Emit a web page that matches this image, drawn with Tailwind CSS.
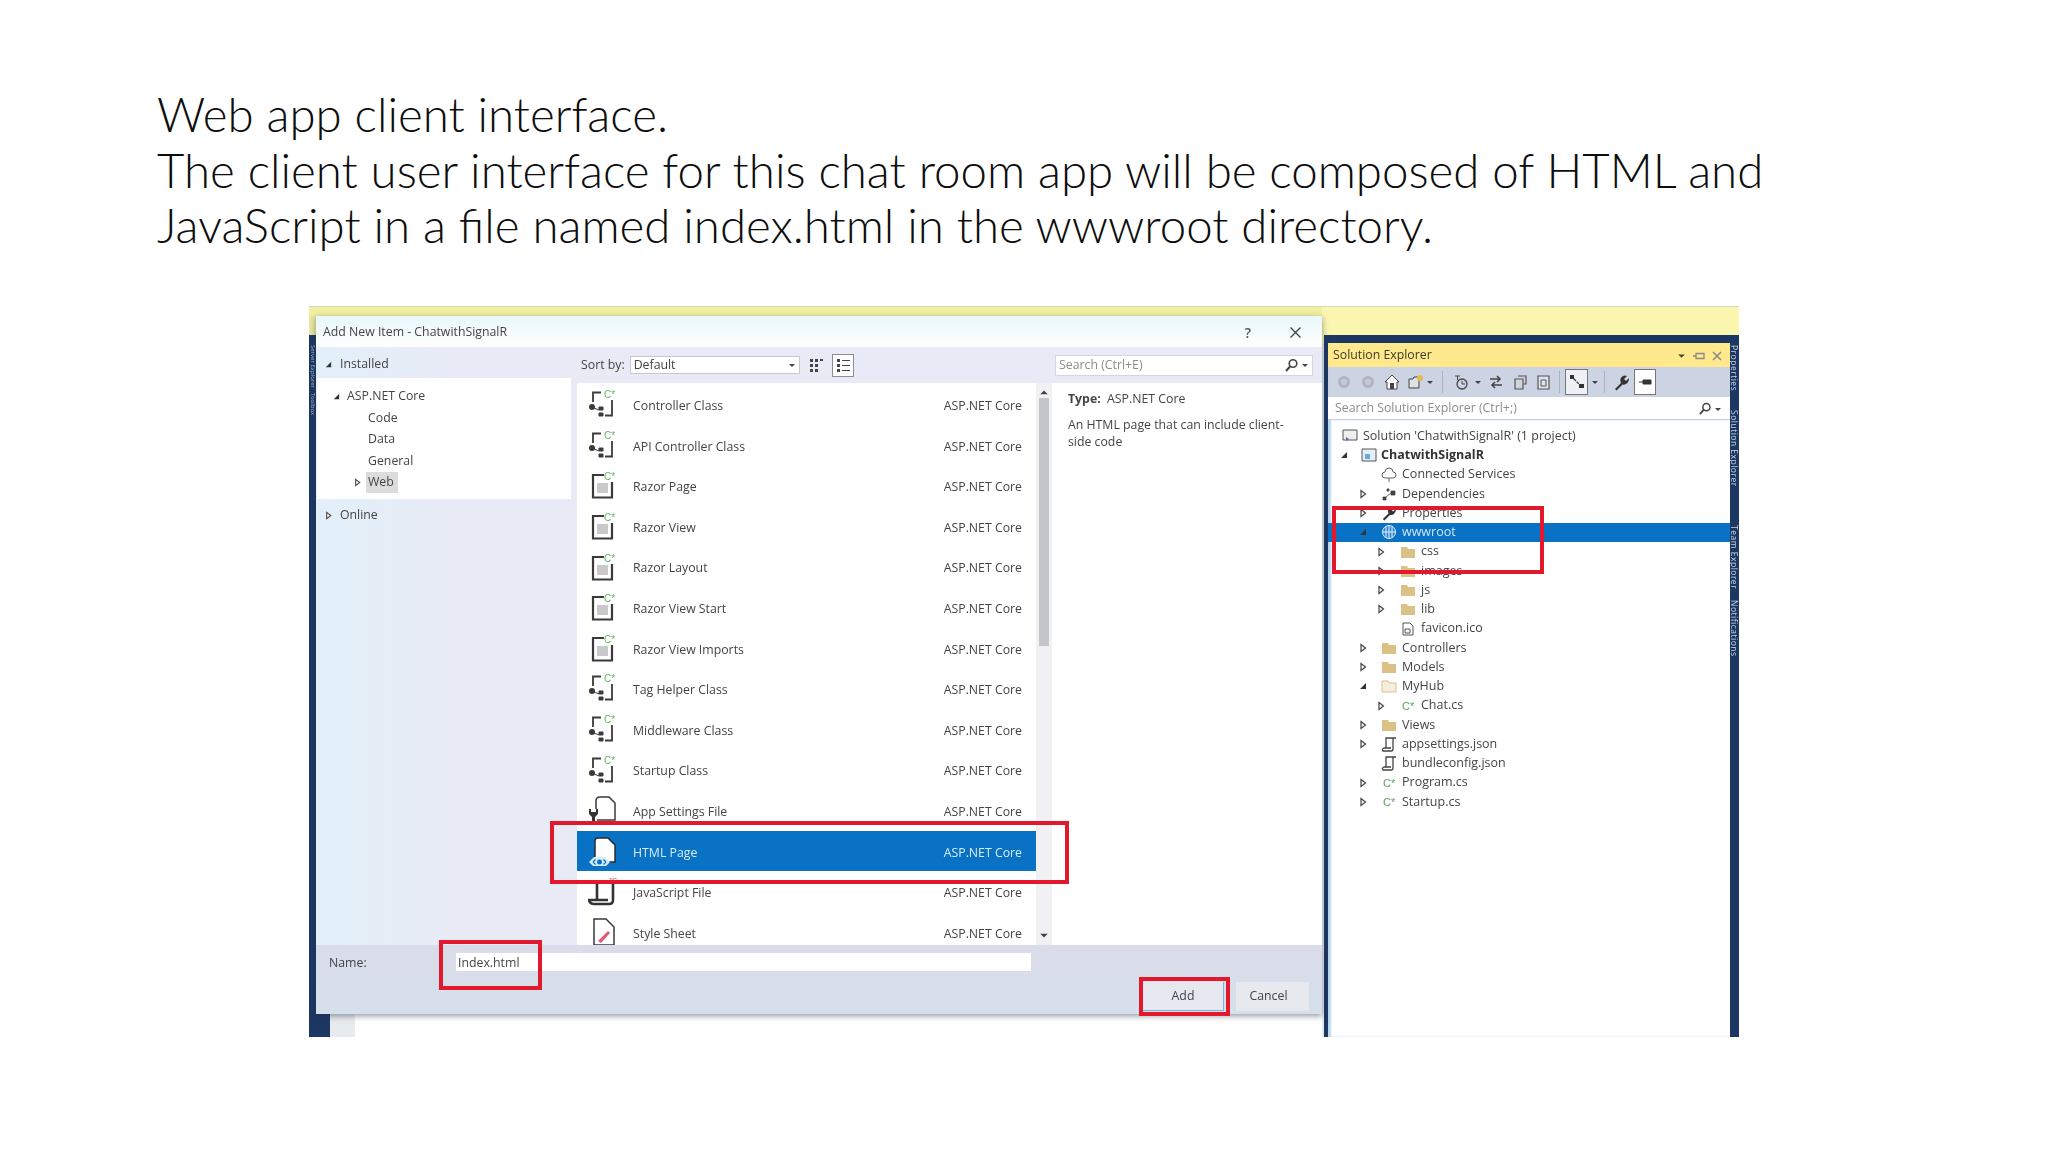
<!DOCTYPE html>
<html lang="en">
<head>
<meta charset="UTF-8">
<title>Web app client interface</title>
<script src="https://cdn.jsdelivr.net/npm/@tailwindcss/browser@4"></script>
</head>
<body class="bg-white">
<!-- shared icons -->
<svg class="hidden">
  <symbol id="ctrl" viewBox="0 0 30 30">
    <path d="M5 13V3.500H13M24 11V26.500H17" fill="none" stroke="#3a3a3a" stroke-width="1.800"/>
    <circle cx="4" cy="18" r="3" fill="#3a3a3a"/><path d="M6 19L11 21M11 18h4v3h-4zM11 24h4v3h-4z" fill="#3a3a3a" stroke="#3a3a3a"/>
    <text x="16" y="9" font-size="10" fill="#5cb85c" font-family="Liberation Sans">C*</text>
  </symbol>
  <symbol id="razor" viewBox="0 0 30 30">
    <path d="M16 5H5V27.500H24V12" fill="#fff" stroke="#3a3a3a" stroke-width="2.200"/>
    <rect x="9" y="13" width="11" height="10" fill="#c9c9c9"/>
    <text x="16" y="10" font-size="10" fill="#5cb85c" font-family="Liberation Sans">C*</text>
  </symbol>
  <symbol id="settings" viewBox="0 0 30 30">
    <path d="M8 14V6Q8 2 12 2H21L27 8V25H9" fill="#fff" stroke="#3a3a3a" stroke-width="1.500"/>
    <path d="M1 14v5l3 3v7h3v-7l3-3v-5l-2 0v3h-5v-3z" fill="#333"/>
  </symbol>
  <symbol id="html" viewBox="0 0 30 30">
    <path d="M7 24V5Q7 2 10 2H20L27 9V26H12" fill="#fff" stroke="#2b2b2b" stroke-width="1.500"/>
    <path d="M1 26L6 21H17L22 26L17 31H6z" fill="#d5ecfb"/>
    <path d="M5 26l2.500-2.500M5 26l2.500 2.500M18 26l-2.500-2.500M18 26l-2.500 2.500" stroke="#0a72c4" stroke-width="1.200"/><circle cx="11.500" cy="26" r="2.500" fill="#0a72c4"/>
  </symbol>
  <symbol id="js" viewBox="0 0 30 30">
    <path d="M9 24V6H20M25 6V24Q25 28 21 28H6Q2 28 1 24H20" fill="none" stroke="#333" stroke-width="2.600"/>
    <text x="20" y="7" font-size="8" fill="#e04040" font-family="Liberation Sans">JS</text>
  </symbol>
  <symbol id="css" viewBox="0 0 30 30">
    <path d="M6 2H18L26 10V28H6z" fill="#fff" stroke="#3a3a3a" stroke-width="1.500"/>
    <path d="M10 24L20 14L22 16L13 26z" fill="#e05a78"/>
  </symbol>
  <symbol id="open" viewBox="0 0 10 10"><path d="M8 2V8H2z" fill="#333"/></symbol>
  <symbol id="closed" viewBox="0 0 10 10"><path d="M3 1.500L7.500 5L3 8.500z" fill="#fff" stroke="#444" stroke-width="1.200"/></symbol>
  <symbol id="folder" viewBox="0 0 16 16"><path d="M1 3H7L8 5H15V14H1z" fill="#dcc186"/></symbol>
  <symbol id="cs" viewBox="0 0 16 16"><text x="2" y="12" font-size="11" fill="#5fa35f" font-family="Liberation Sans">C*</text></symbol>
  <symbol id="json" viewBox="0 0 16 16"><path d="M5 12V2H15M12 2V13Q12 15 10 15H2Q0.500 13 3 12H10" fill="none" stroke="#444" stroke-width="1.300"/></symbol>
  <symbol id="drop" viewBox="0 0 8 8"><path d="M1 3H7L4 6z" fill="#444"/></symbol>
</svg>

<div class="w-[2048px] h-[1152px] overflow-hidden font-['Open_Sans',sans-serif]">
  <div class="h-[306px] pt-[86px] pl-[157px] font-['Lato',sans-serif] font-light text-[47.400px] leading-[55.500px] text-[#0d0d0d]">
    <p>Web app client interface.</p>
    <p>The client user interface for this chat room app will be composed of HTML and</p>
    <p>JavaScript in a file named index.html in the wwwroot directory.</p>
  </div>

  <!-- the pasted IDE screenshot -->
  <div class="relative ml-[309px] w-[1430px] h-[731px] overflow-hidden blur-[0.6px] flex text-[12.300px] text-[#444] bg-[#fbf6b0]">
    <!-- left part: dialog -->
    <div class="w-[1013px] flex flex-col shrink-0">
      <div class="h-[10px] bg-[#f0f0a0] border-t border-[#d8d8c0]"></div>
      <div class="flex flex-1 min-h-0">
        <div class="w-[7px] flex flex-col shrink-0">
          <div class="h-[19px] bg-[#e8e8a0]"></div>
          <div class="flex-1 bg-[#1d3763] overflow-hidden text-[6px] leading-[7px] text-[#aab8d0] [writing-mode:vertical-rl] pt-[10px] whitespace-nowrap">Server Explorer &nbsp; Toolbox</div>
        </div>
        <div class="flex-1 flex flex-col min-w-0">
          <!-- dialog box -->
          <div class="h-[698px] flex flex-col bg-[#e8ebf5] shadow-[0_2px_6px_rgba(40,50,70,0.5)] relative z-10">
            <div class="h-[31px] shrink-0 flex items-center bg-gradient-to-b from-[#e8f7fa] to-white pl-[7px] pr-[20px] pt-[2px]">
              <span>Add New Item - ChatwithSignalR</span>
              <span class="ml-auto text-[14px] text-[#555] font-semibold">?</span>
              <svg class="ml-[38px] w-[13px] h-[13px]" viewBox="0 0 13 13"><path d="M1.500 1.500L11.500 11.500M11.500 1.500L1.500 11.500" stroke="#444" stroke-width="1.400"/></svg>
            </div>
            <div class="flex h-[598px] shrink-0">
              <!-- templates tree -->
              <div class="w-[261px] shrink-0 bg-gradient-to-r from-[#e2f0f9] via-[#e8ebf5] to-[#e8ebf5]">
                <div class="h-[31px] flex items-center pl-[8px] pt-[3px]">
                  <svg class="w-[9px] h-[9px]"><use href="#open"/></svg><span class="ml-[7px]">Installed</span>
                </div>
                <div class="ml-[1px] w-[254px] h-[121px] bg-white pt-[8px] pl-[15px]">
                  <div class="h-[21px] flex items-center"><svg class="w-[9px] h-[9px]"><use href="#open"/></svg><span class="ml-[6px]">ASP.NET Core</span></div>
                  <div class="h-[21.500px] flex items-center pl-[36px]">Code</div>
                  <div class="h-[21.500px] flex items-center pl-[36px]">Data</div>
                  <div class="h-[21.500px] flex items-center pl-[36px]">General</div>
                  <div class="h-[21px] flex items-center pl-[21px]"><svg class="w-[9px] h-[9px]"><use href="#closed"/></svg><span class="ml-[4px] px-[2px] w-[32px] h-[21px] bg-[#dcdcdc] flex items-center">Web</span></div>
                </div>
                <div class="h-[30px] flex items-center pl-[8px] pt-[2px]"><svg class="w-[9px] h-[9px]"><use href="#closed"/></svg><span class="ml-[7px]">Online</span></div>
              </div>
              <!-- item list -->
              <div class="w-[475px] shrink-0 flex flex-col">
                <div class="h-[36px] shrink-0 flex items-center pl-[4px]">
                  <span>Sort by:</span>
                  <div class="ml-[5px] w-[170px] h-[18px] bg-white border border-[#c6c9d4] flex items-center pl-[3px] pr-[3px] justify-between"><span>Default</span><svg class="w-[8px] h-[8px]"><use href="#drop"/></svg></div>
                  <svg class="ml-[8px] w-[16px] h-[16px]" viewBox="0 0 16 16"><path d="M2 2h3v3h-3zM7 2h3v3h-3zM12 2h3v2h-3zM2 7h3v3h-3zM7 7h3v3h-3zM2 12h3v3h-3zM7 12h3v3h-3z" fill="#444"/></svg>
                  <div class="ml-[8px] w-[22px] h-[23px] border border-[#8a8d99] bg-white flex items-center justify-center">
                    <svg class="w-[16px] h-[16px]" viewBox="0 0 16 16"><path d="M2 2h3v3h-3zM2 7h3v3h-3zM2 12h3v3h-3z" fill="#444"/><path d="M7 3.500h8M7 8.500h8M7 13.500h8" stroke="#444"/></svg>
                  </div>
                </div>
                <div class="flex flex-1 min-h-0 bg-white">
                  <div class="w-[459px] pt-[1px] overflow-hidden">
                    <div class="h-[40.600px] flex items-center pl-[11px] pr-[14px]"><svg class="w-[30px] h-[30px]"><use href="#ctrl"/></svg><span class="ml-[15px] pt-[4px]">Controller Class</span><span class="ml-auto pt-[4px]">ASP.NET Core</span></div>
                    <div class="h-[40.600px] flex items-center pl-[11px] pr-[14px]"><svg class="w-[30px] h-[30px]"><use href="#ctrl"/></svg><span class="ml-[15px] pt-[4px]">API Controller Class</span><span class="ml-auto pt-[4px]">ASP.NET Core</span></div>
                    <div class="h-[40.600px] flex items-center pl-[11px] pr-[14px]"><svg class="w-[30px] h-[30px]"><use href="#razor"/></svg><span class="ml-[15px] pt-[4px]">Razor Page</span><span class="ml-auto pt-[4px]">ASP.NET Core</span></div>
                    <div class="h-[40.600px] flex items-center pl-[11px] pr-[14px]"><svg class="w-[30px] h-[30px]"><use href="#razor"/></svg><span class="ml-[15px] pt-[4px]">Razor View</span><span class="ml-auto pt-[4px]">ASP.NET Core</span></div>
                    <div class="h-[40.600px] flex items-center pl-[11px] pr-[14px]"><svg class="w-[30px] h-[30px]"><use href="#razor"/></svg><span class="ml-[15px] pt-[4px]">Razor Layout</span><span class="ml-auto pt-[4px]">ASP.NET Core</span></div>
                    <div class="h-[40.600px] flex items-center pl-[11px] pr-[14px]"><svg class="w-[30px] h-[30px]"><use href="#razor"/></svg><span class="ml-[15px] pt-[4px]">Razor View Start</span><span class="ml-auto pt-[4px]">ASP.NET Core</span></div>
                    <div class="h-[40.600px] flex items-center pl-[11px] pr-[14px]"><svg class="w-[30px] h-[30px]"><use href="#razor"/></svg><span class="ml-[15px] pt-[4px]">Razor View Imports</span><span class="ml-auto pt-[4px]">ASP.NET Core</span></div>
                    <div class="h-[40.600px] flex items-center pl-[11px] pr-[14px]"><svg class="w-[30px] h-[30px]"><use href="#ctrl"/></svg><span class="ml-[15px] pt-[4px]">Tag Helper Class</span><span class="ml-auto pt-[4px]">ASP.NET Core</span></div>
                    <div class="h-[40.600px] flex items-center pl-[11px] pr-[14px]"><svg class="w-[30px] h-[30px]"><use href="#ctrl"/></svg><span class="ml-[15px] pt-[4px]">Middleware Class</span><span class="ml-auto pt-[4px]">ASP.NET Core</span></div>
                    <div class="h-[40.600px] flex items-center pl-[11px] pr-[14px]"><svg class="w-[30px] h-[30px]"><use href="#ctrl"/></svg><span class="ml-[15px] pt-[4px]">Startup Class</span><span class="ml-auto pt-[4px]">ASP.NET Core</span></div>
                    <div class="h-[40.600px] flex items-center pl-[11px] pr-[14px]"><svg class="w-[30px] h-[30px]"><use href="#settings"/></svg><span class="ml-[15px] pt-[4px]">App Settings File</span><span class="ml-auto pt-[4px]">ASP.NET Core</span></div>
                    <div class="h-[40.600px] flex items-center pl-[11px] pr-[14px] bg-[#0a72c4] text-[#d5ecfb]"><svg class="w-[30px] h-[30px]"><use href="#html"/></svg><span class="ml-[15px] pt-[4px]">HTML Page</span><span class="ml-auto pt-[4px]">ASP.NET Core</span></div>
                    <div class="h-[40.600px] flex items-center pl-[11px] pr-[14px]"><svg class="w-[30px] h-[30px]"><use href="#js"/></svg><span class="ml-[15px] pt-[4px]">JavaScript File</span><span class="ml-auto pt-[4px]">ASP.NET Core</span></div>
                    <div class="h-[40.600px] flex items-center pl-[11px] pr-[14px]"><svg class="w-[30px] h-[30px]"><use href="#css"/></svg><span class="ml-[15px] pt-[4px]">Style Sheet</span><span class="ml-auto pt-[4px]">ASP.NET Core</span></div>
                  </div>
                  <div class="w-[16px] bg-[#f1f1f3] flex flex-col items-center relative">
                    <svg class="w-[10px] h-[10px] mt-[5px] rotate-180"><use href="#drop"/></svg>
                    <div class="w-[10px] h-[248px] bg-[#c4c5cb] mt-[0px]"></div>
                    <svg class="w-[10px] h-[10px] mt-auto mb-[5px]"><use href="#drop"/></svg>
                  </div>
                </div>
              </div>
              <!-- description -->
              <div class="flex-1 flex flex-col min-w-0">
                <div class="h-[36px] shrink-0 flex items-center">
                  <div class="ml-[3px] w-[258px] h-[21px] bg-white border border-[#d4d7e0] flex items-center pl-[3px] pr-[3px] text-[#8c8c8c]">
                    <span>Search (Ctrl+E)</span>
                    <svg class="ml-auto w-[15px] h-[15px]" viewBox="0 0 15 15"><circle cx="9" cy="5.500" r="3.800" fill="none" stroke="#444" stroke-width="1.600"/><path d="M6 8.500L2 13" stroke="#444" stroke-width="2"/></svg>
                    <svg class="w-[8px] h-[8px] ml-[2px]"><use href="#drop"/></svg>
                  </div>
                </div>
                <div class="flex-1 bg-white pl-[16px] pt-[7px] leading-[17px]">
                  <p><b class="font-bold">Type:</b> &nbsp;ASP.NET Core</p>
                  <p class="mt-[9px] w-[230px]">An HTML page that can include client-side code</p>
                </div>
              </div>
            </div>
            <!-- name row -->
            <div class="flex-1 relative bg-gradient-to-b from-[#dadce9] to-[#d5e0ea]">
              <div class="flex items-center h-[18px] mt-[8px] pl-[13px]">
                <span class="w-[127px] pt-[2px]">Name:</span>
                <div class="w-[575px] h-[18px] bg-white flex items-center pl-[2px] pt-[2px]">Index.html</div>
              </div>
              <div class="flex mt-[11px] justify-end pr-[13px] gap-[12px]">
                <div class="w-[81px] h-[29px] bg-[#e6e8f0] border-b border-r border-[#7fb0de] flex items-center justify-center">Add</div>
                <div class="w-[73px] h-[29px] bg-[#e8e9ef] flex items-center justify-center pr-[8px]">Cancel</div>
              </div>
            </div>
          </div>
          <!-- what shows below the dialog -->
          <div class="flex-1 flex bg-white">
            <div class="w-[14px] bg-[#1d3763]"></div>
            <div class="w-[25px] bg-[#e8ebee]"></div>
          </div>
        </div>
      </div>
    </div>

    <!-- right part: solution explorer -->
    <div class="flex-1 flex flex-col min-w-0">
      <div class="h-[29px] bg-[#fbf6b0] border-t border-[#d8d8c0]"></div>
      <div class="flex-1 flex min-h-0 bg-[#fbf6b0]">
        <div class="w-[2px] mt-[8px] bg-[#e4e9f2]"></div>
        <div class="flex-1 flex bg-[#1d3763] min-w-0">
          <div class="w-[4px]"></div>
          <div class="flex-1 flex flex-col mt-[8px] min-w-0 bg-white">
            <div class="h-[24px] shrink-0 bg-[#ffe98c] flex items-center pl-[5px] pr-[8px] text-[#3c3c28] pt-[1px]">
              <span>Solution Explorer</span>
              <svg class="ml-auto w-[9px] h-[9px]"><use href="#drop"/></svg>
              <svg class="ml-[6px] w-[14px] h-[10px]" viewBox="0 0 14 10"><path d="M1 5h3M4 2.500h8v5h-8z" fill="none" stroke="#888" stroke-width="1.300"/></svg>
              <svg class="ml-[6px] w-[10px] h-[10px]" viewBox="0 0 10 10"><path d="M1 1L9 9M9 1L1 9" stroke="#888" stroke-width="1.500"/></svg>
            </div>
            <div class="h-[30px] shrink-0 bg-[#ccd3e3] flex items-center pl-[9px]">
              <svg class="w-[14px] h-[14px]" viewBox="0 0 14 14"><circle cx="7" cy="7" r="6" fill="#b0b4c0"/><circle cx="7" cy="7" r="3" fill="#c4cad8"/></svg>
              <svg class="ml-[10px] w-[14px] h-[14px]" viewBox="0 0 14 14"><circle cx="7" cy="7" r="6" fill="#b0b4c0"/><circle cx="7" cy="7" r="3" fill="#c4cad8"/></svg>
              <svg class="ml-[9px] w-[16px] h-[16px]" viewBox="0 0 16 16"><path d="M1 8L8 1L15 8H13V15H3V8z" fill="#fff" stroke="#444"/><rect x="6" y="9" width="4" height="6" fill="#444"/></svg>
              <svg class="ml-[7px] w-[17px] h-[16px]" viewBox="0 0 17 16"><path d="M2 5H6L7 3H12V14H2z" fill="#dfe0e4" stroke="#444"/><circle cx="13" cy="4" r="3" fill="#e9b949"/></svg>
              <svg class="ml-[2px] w-[8px] h-[8px]"><use href="#drop"/></svg>
              <div class="ml-[8px] w-[1px] h-[22px] bg-[#aab1c2]"></div>
              <svg class="ml-[10px] w-[17px] h-[17px]" viewBox="0 0 17 17"><circle cx="9" cy="10" r="5" fill="none" stroke="#444" stroke-width="1.300"/><path d="M9 7v3h3M2 2h5M4.500 2v4" fill="none" stroke="#444"/></svg>
              <svg class="ml-[4px] w-[8px] h-[8px]"><use href="#drop"/></svg>
              <svg class="ml-[6px] w-[16px] h-[14px]" viewBox="0 0 16 14"><path d="M2 4h10M9 1l3 3-3 3M14 10H4M7 7l-3 3 3 3" fill="none" stroke="#444" stroke-width="1.500"/></svg>
              <svg class="ml-[8px] w-[15px] h-[15px]" viewBox="0 0 15 15"><path d="M6 1h8v8h-3M3 4h8v10H3z" fill="#cfd3de" stroke="#555" stroke-width="1.200"/></svg>
              <svg class="ml-[8px] w-[17px] h-[17px]" viewBox="0 0 17 17"><path d="M3 2h11v13H3z" fill="#e0e3ec" stroke="#555" stroke-width="1.200"/><path d="M6 6h5v6H6z" fill="none" stroke="#555"/></svg>
              <div class="ml-[7px] w-[1px] h-[22px] bg-[#aab1c2]"></div>
              <div class="ml-[5px] w-[23px] h-[26px] bg-[#eef0f6] border border-[#777] flex items-center justify-center">
                <svg class="w-[16px] h-[16px]" viewBox="0 0 16 16"><path d="M2 2L13 13" stroke="#444" stroke-width="1.400" stroke-dasharray="3 1"/><rect x="1" y="1" width="4" height="4" fill="#333"/><rect x="10" y="10" width="5" height="4" fill="#333"/></svg>
              </div>
              <svg class="ml-[3px] w-[8px] h-[8px]"><use href="#drop"/></svg>
              <div class="ml-[5px] w-[1px] h-[22px] bg-[#aab1c2]"></div>
              <svg class="ml-[8px] w-[17px] h-[17px]" viewBox="0 0 17 17"><path d="M2 15L8 9Q6 4 10 2Q12 1 14 2L11 5L13 7L16 4Q16 8 13 10Q11 11 9.500 10.500L3.500 16.500z" fill="#333"/></svg>
              <div class="ml-[4px] w-[22px] h-[26px] bg-white border border-[#777] flex items-center justify-center">
                <svg class="w-[14px] h-[8px]" viewBox="0 0 14 8"><path d="M1 4h4M5 2h8v4H5z" fill="#333" stroke="#333"/></svg>
              </div>
            </div>
            <div class="h-[23px] shrink-0 bg-white border-b border-[#ccd0dc] flex items-center pl-[7px] pr-[8px] text-[#8c8c8c] pt-[1px]">
              <span>Search Solution Explorer (Ctrl+;)</span>
              <svg class="ml-auto w-[14px] h-[14px]" viewBox="0 0 15 15"><circle cx="9" cy="5.500" r="3.800" fill="none" stroke="#444" stroke-width="1.600"/><path d="M6 8.500L2 13" stroke="#444" stroke-width="2"/></svg>
              <svg class="ml-[2px] w-[8px] h-[8px]"><use href="#drop"/></svg>
            </div>
            <!-- tree -->
            <div class="pt-[6.500px] flex-1 overflow-hidden text-[12.500px] shadow-[inset_3px_0_2px_rgba(170,205,235,0.8)]">
              <div class="h-[19.250px] flex items-center pl-[14px]"><svg class="w-[16px] h-[16px]" viewBox="0 0 16 16"><path d="M1 2h14v10H1z" fill="#eee" stroke="#555"/><path d="M4 9l3 2-3 2z" fill="#8659a8"/></svg><span class="ml-[5px]">Solution 'ChatwithSignalR' (1 project)</span></div>
              <div class="h-[19.250px] flex items-center pl-[11px]"><svg class="w-[10px] h-[10px]"><use href="#open"/></svg><svg class="ml-[12px] w-[16px] h-[16px]" viewBox="0 0 16 16"><path d="M1 2h14v12H1z" fill="#e4eef6" stroke="#555"/><path d="M4 7h5v5H4z" fill="#6aa8d8"/></svg><span class="ml-[4px] font-bold text-[#333]">ChatwithSignalR</span></div>
              <div class="h-[19.250px] flex items-center pl-[53px]"><svg class="w-[16px] h-[16px]" viewBox="0 0 16 16"><path d="M4 11a3 3 0 0 1 0-6a4 4 0 0 1 8 0a3 3 0 0 1 0 6zM8 11v4" fill="none" stroke="#666"/></svg><span class="ml-[5px]">Connected Services</span></div>
              <div class="h-[19.250px] flex items-center pl-[30px]"><svg class="w-[10px] h-[10px]"><use href="#closed"/></svg><svg class="ml-[13px] w-[16px] h-[16px]" viewBox="0 0 16 16"><path d="M2 11h3v3H2zM10 5h4v4h-4zM5 11L10 7M6 3h2v2H6z" fill="#444" stroke="#444" stroke-width="0.800"/></svg><span class="ml-[5px]">Dependencies</span></div>
              <div class="h-[19.250px] flex items-center pl-[30px]"><svg class="w-[10px] h-[10px]"><use href="#closed"/></svg><svg class="ml-[13px] w-[16px] h-[16px]" viewBox="0 0 17 17"><path d="M2 15L8 9Q6 4 10 2Q12 1 14 2L11 5L13 7L16 4Q16 8 13 10Q11 11 9.500 10.500L3.500 16.500z" fill="#333"/></svg><span class="ml-[5px]">Properties</span></div>
              <div class="h-[19.250px] flex items-center pl-[30px] bg-[#0a72c4] text-[#cfe6fa]"><svg class="w-[10px] h-[10px]"><use href="#open"/></svg><svg class="ml-[13px] w-[16px] h-[16px]" viewBox="0 0 16 16"><circle cx="8" cy="8" r="6.500" fill="#2f86cf" stroke="#e5f2fc"/><path d="M1.500 8h13M8 1.500v13M5 2.500v11M11 2.500v11" stroke="#e5f2fc"/></svg><span class="ml-[5px]">wwwroot</span></div>
              <div class="h-[19.250px] flex items-center pl-[48px]"><svg class="w-[10px] h-[10px]"><use href="#closed"/></svg><svg class="ml-[14px] w-[16px] h-[16px]"><use href="#folder"/></svg><span class="ml-[5px]">css</span></div>
              <div class="h-[19.250px] flex items-center pl-[48px]"><svg class="w-[10px] h-[10px]"><use href="#closed"/></svg><svg class="ml-[14px] w-[16px] h-[16px]"><use href="#folder"/></svg><span class="ml-[5px]">images</span></div>
              <div class="h-[19.250px] flex items-center pl-[48px]"><svg class="w-[10px] h-[10px]"><use href="#closed"/></svg><svg class="ml-[14px] w-[16px] h-[16px]"><use href="#folder"/></svg><span class="ml-[5px]">js</span></div>
              <div class="h-[19.250px] flex items-center pl-[48px]"><svg class="w-[10px] h-[10px]"><use href="#closed"/></svg><svg class="ml-[14px] w-[16px] h-[16px]"><use href="#folder"/></svg><span class="ml-[5px]">lib</span></div>
              <div class="h-[19.250px] flex items-center pl-[72px]"><svg class="w-[16px] h-[16px]" viewBox="0 0 16 16"><path d="M3 2H10L13 5V14H3zM5 8h5v4H5z" fill="none" stroke="#555"/></svg><span class="ml-[5px]">favicon.ico</span></div>
              <div class="h-[19.250px] flex items-center pl-[30px]"><svg class="w-[10px] h-[10px]"><use href="#closed"/></svg><svg class="ml-[13px] w-[16px] h-[16px]"><use href="#folder"/></svg><span class="ml-[5px]">Controllers</span></div>
              <div class="h-[19.250px] flex items-center pl-[30px]"><svg class="w-[10px] h-[10px]"><use href="#closed"/></svg><svg class="ml-[13px] w-[16px] h-[16px]"><use href="#folder"/></svg><span class="ml-[5px]">Models</span></div>
              <div class="h-[19.250px] flex items-center pl-[30px]"><svg class="w-[10px] h-[10px]"><use href="#open"/></svg><svg class="ml-[13px] w-[16px] h-[16px]" viewBox="0 0 16 16"><path d="M1 3H7L8 5H15V14H1z" fill="#f4eee0" stroke="#dcc186"/></svg><span class="ml-[5px]">MyHub</span></div>
              <div class="h-[19.250px] flex items-center pl-[48px]"><svg class="w-[10px] h-[10px]"><use href="#closed"/></svg><svg class="ml-[14px] w-[16px] h-[16px]"><use href="#cs"/></svg><span class="ml-[5px]">Chat.cs</span></div>
              <div class="h-[19.250px] flex items-center pl-[30px]"><svg class="w-[10px] h-[10px]"><use href="#closed"/></svg><svg class="ml-[13px] w-[16px] h-[16px]"><use href="#folder"/></svg><span class="ml-[5px]">Views</span></div>
              <div class="h-[19.250px] flex items-center pl-[30px]"><svg class="w-[10px] h-[10px]"><use href="#closed"/></svg><svg class="ml-[13px] w-[16px] h-[16px]"><use href="#json"/></svg><span class="ml-[5px]">appsettings.json</span></div>
              <div class="h-[19.250px] flex items-center pl-[53px]"><svg class="w-[16px] h-[16px]"><use href="#json"/></svg><span class="ml-[5px]">bundleconfig.json</span></div>
              <div class="h-[19.250px] flex items-center pl-[30px]"><svg class="w-[10px] h-[10px]"><use href="#closed"/></svg><svg class="ml-[13px] w-[16px] h-[16px]"><use href="#cs"/></svg><span class="ml-[5px]">Program.cs</span></div>
              <div class="h-[19.250px] flex items-center pl-[30px]"><svg class="w-[10px] h-[10px]"><use href="#closed"/></svg><svg class="ml-[13px] w-[16px] h-[16px]"><use href="#cs"/></svg><span class="ml-[5px]">Startup.cs</span></div>
            </div>
          </div>
          <div class="w-[9px] shrink-0 mt-[8px] overflow-hidden text-[8.500px] leading-[9px] tracking-[0.5px] text-[#c6d2e4] [writing-mode:vertical-rl] flex whitespace-nowrap">
            <span class="h-[67px] shrink-0 pt-[2px]">Properties</span>
            <span class="h-[115px] shrink-0">Solution Explorer</span>
            <span class="h-[75px] shrink-0">Team Explorer</span>
            <span class="h-[90px] shrink-0">Notifications</span>
          </div>
        </div>
      </div>
    </div>

    <!-- annotation boxes -->
    <div class="absolute z-20 left-[241px] top-[515px] w-[519px] h-[63px] border-[4px] border-[#e2192c]"></div>
    <div class="absolute z-20 left-[130px] top-[634px] w-[103px] h-[50px] border-[4px] border-[#e2192c]"></div>
    <div class="absolute z-20 left-[830px] top-[671px] w-[91px] h-[39px] border-[4px] border-[#e2192c]"></div>
    <div class="absolute z-20 left-[1023px] top-[200px] w-[212px] h-[68px] border-[4px] border-[#e2192c]"></div>
  </div>
</div>
</body>
</html>
